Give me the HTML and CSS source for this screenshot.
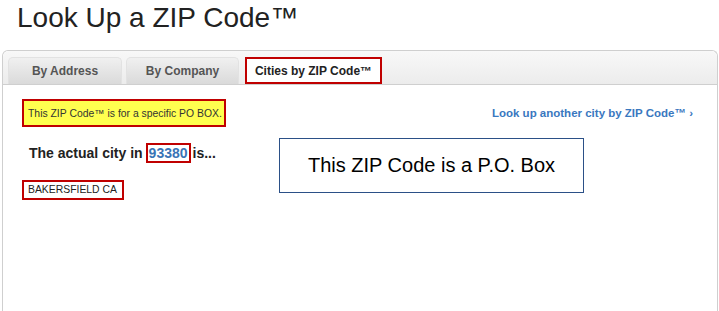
FILE: index.html
```html
<!DOCTYPE html>
<html>
<head>
<meta charset="utf-8">
<link rel="stylesheet" href="styles.css">
</head>
<body>
<h1 class="title">Look Up a ZIP Code™</h1>
<div class="panel">
  <div class="tabbar">
    <div class="tab">By Address</div>
    <div class="tab">By Company</div>
    <div class="tab active">Cities by ZIP Code™</div>
  </div>
  <div class="content">
    <div class="toprow">
      <div class="notice">This ZIP Code™ is for a specific PO BOX.</div>
      <a class="lookup" href="#">Look up another city by ZIP Code™ ›</a>
    </div>
    <div class="mainrow">
      <div class="leftcol">
        <div class="heading">The actual city in<span class="zip">93380</span>is...</div>
        <div class="city">BAKERSFIELD CA</div>
      </div>
      <div class="pobox">This ZIP Code is a P.O. Box</div>
    </div>
  </div>
</div>
</body>
</html>
```
FILE: styles.css
```css
html, body {
  margin: 0;
  padding: 0;
  background: #fff;
  font-family: "Liberation Sans", Arial, sans-serif;
}
body {
  width: 719px;
  height: 311px;
  overflow: hidden;
}
.title {
  margin: 0;
  padding: 2px 0 0 17px;
  font-size: 28px;
  font-weight: normal;
  line-height: 32px;
  color: #222;
  height: 48px;
  box-sizing: border-box;
}
.panel {
  margin: 2px 1px 0 2px;
  border: 1px solid #cfcfcf;
  border-bottom: none;
  border-radius: 6px 6px 0 0;
  height: 270px;
}
.tabbar {
  display: flex;
  align-items: flex-end;
  gap: 4px;
  padding: 6px 0 0 5px;
  height: 27px;
  background: linear-gradient(#f8f8f8, #ececec);
  border-bottom: 1px solid #cfcfcf;
  border-radius: 6px 6px 0 0;
}
.tab {
  height: 27px;
  box-sizing: border-box;
  display: flex;
  align-items: center;
  justify-content: center;
  font-size: 12px;
  font-weight: bold;
  color: #555;
  background: linear-gradient(#f0f0f0, #dadada);
  border-radius: 5px 5px 0 0;
  border: 1px solid #e2e2e2;
  border-bottom: none;
  width: 114px;
}
.tab:nth-child(2) {
  width: 113px;
}
.tab.active {
  width: 137px;
  margin-left: 2px;
  background: #fff;
  color: #222;
  border: 2px solid #c00000;
  border-radius: 0;
}
.content {
  padding: 14px 24px 0 19px;
}
.toprow {
  display: flex;
  justify-content: space-between;
  align-items: center;
}
.notice {
  width: 204px;
  height: 28px;
  box-sizing: border-box;
  border: 2px solid #c00000;
  background: #ffff4f;
  font-size: 10.4px;
  color: #333;
  padding-left: 4px;
  display: flex;
  align-items: center;
  white-space: nowrap;
}
.lookup {
  font-size: 11.5px;
  font-weight: bold;
  color: #3a78bf;
  text-decoration: none;
}
.mainrow {
  display: flex;
  margin-top: 11px;
}
.leftcol {
  width: 257px;
}
.heading {
  margin: 5px 0 0 7px;
  font-size: 14px;
  font-weight: bold;
  color: #222;
  line-height: 20px;
  white-space: nowrap;
}
.zip {
  color: #3a74b6;
  border: 2px solid #c00000;
  padding: 0 1px;
  margin: 0 2px 0 3px;
}
.city {
  margin-top: 17px;
  display: inline-block;
  border: 2px solid #c00000;
  font-size: 10.4px;
  color: #222;
  padding: 1px 5px 1px 4px;
  line-height: 14px;
  white-space: nowrap;
}
.pobox {
  width: 305px;
  height: 55px;
  box-sizing: border-box;
  border: 1px solid #2b5087;
  font-size: 20px;
  color: #000;
  display: flex;
  align-items: center;
  justify-content: center;
}
```
